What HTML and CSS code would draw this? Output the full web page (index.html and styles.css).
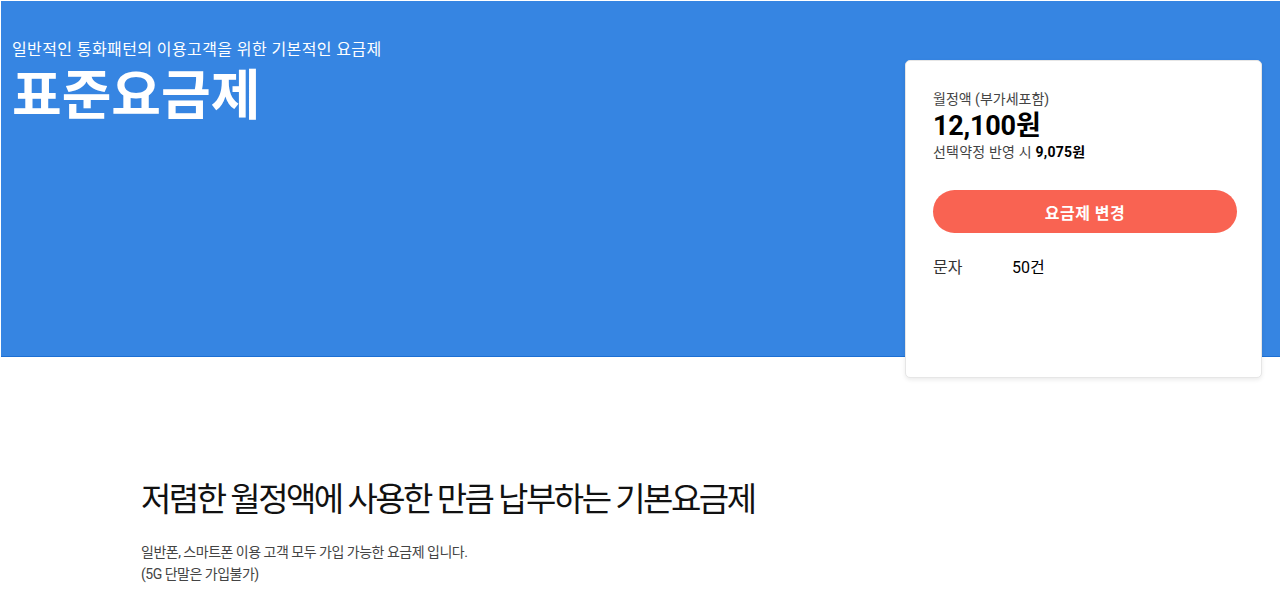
FILE: index.html
```html
<!DOCTYPE html>
<html lang="ko">
<head>
  <meta charset="UTF-8" />
  <meta name="viewport" content="width=device-width, initial-scale=1.0"/>
  <title>표준요금제</title>
  <link rel="stylesheet" href="styles.css">
</head>
<body>
  <section class="hero">
    <p class="hero-sub">일반적인 통화패턴의 이용고객을 위한 기본적인 요금제</p>
    <h1 class="hero-title">표준요금제</h1>

    <div class="price-card">
      <p class="price-label">월정액 (부가세포함)</p>
      <p class="price">12,100원</p>
      <p class="price-discount">선택약정 반영 시 <strong>9,075원</strong></p>
      <button type="button" class="change-btn">요금제 변경</button>
      <dl class="benefits">
        <dt>문자</dt>
        <dd>50건</dd>
      </dl>
    </div>
  </section>

  <section class="intro">
    <h2>저렴한 월정액에 사용한 만큼 납부하는 기본요금제</h2>
    <p>일반폰, 스마트폰 이용 고객 모두 가입 가능한 요금제 입니다.<br>(5G 단말은 가입불가)</p>
  </section>
</body>
</html>
```

FILE: styles.css
```css
body {
  margin: 0;
  padding: 1px 0 0 1px;
  background: #fff;
  font-family: Roboto, "Noto Sans CJK KR", sans-serif;
  color: #111;
}
p {
  margin: 0;
}
.hero {
  position: relative;
  height: 356px;
  padding: 38px 11px 0;
  box-sizing: border-box;
  background: #3685e2;
  border-bottom: 1px solid #1c6fd3;
  color: #fff;
}
.hero-sub {
  font-size: 16px;
  line-height: 22px;
  letter-spacing: 0.4px;
}
.hero-title {
  margin: 0;
  padding-top: 4px;
  font-size: 54px;
  font-weight: 700;
  line-height: 64px;
  letter-spacing: 0;
}
.price-card {
  position: absolute;
  top: 59px;
  left: 904px;
  width: 357px;
  height: 318px;
  padding: 28px 26px 0 27px;
  box-sizing: border-box;
  background: #fff;
  border: 1px solid #e6e6e6;
  border-radius: 5px;
  box-shadow: 0 2px 4px rgba(0,0,0,0.08);
  color: #111;
}
.price-label {
  font-size: 14px;
  line-height: 20px;
  color: #444;
}
.price {
  font-size: 27px;
  font-weight: 700;
  line-height: 34px;
  color: #000;
  letter-spacing: -0.2px;
}
.price-discount {
  font-size: 14px;
  line-height: 18px;
  letter-spacing: 0.2px;
  color: #444;
}
.price-discount strong {
  color: #000;
}
.change-btn {
  display: block;
  width: 304px;
  height: 43px;
  margin-top: 29px;
  border: none;
  border-radius: 22px;
  background: #f96352;
  color: #fff;
  font-family: inherit;
  font-size: 16px;
  font-weight: 700;
  letter-spacing: 0.5px;
  cursor: pointer;
}
.benefits {
  display: grid;
  grid-template-columns: 79px 1fr;
  margin: 24px 0 0;
  font-size: 16px;
  line-height: 22px;
}
.benefits dt {
  color: #333;
}
.benefits dd {
  margin: 0;
  color: #000;
}
.intro {
  padding: 121px 0 0 140px;
}
.intro h2 {
  margin: 0;
  font-size: 33px;
  font-weight: 400;
  line-height: 44px;
  letter-spacing: -2.5px;
  color: #111;
}
.intro p {
  margin-top: 19px;
  font-size: 14px;
  line-height: 22px;
  letter-spacing: -0.5px;
  color: #444;
}
```
